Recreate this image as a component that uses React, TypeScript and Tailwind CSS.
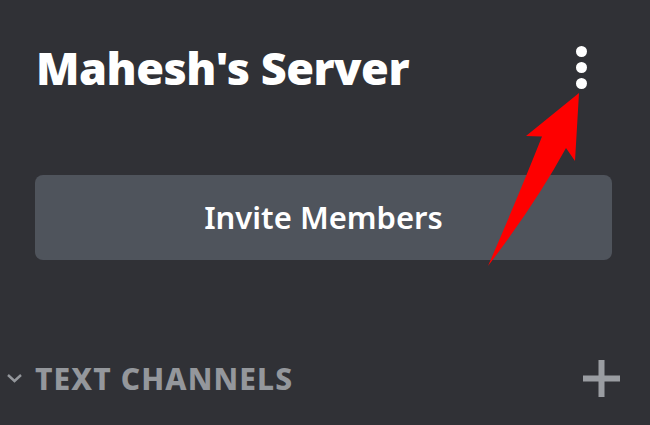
export default function App() {
  return (
    <div className="relative flex h-[425px] w-[650px] flex-col overflow-hidden bg-[#303136] font-['Noto_Sans','Open_Sans',sans-serif]">
      <div className="flex h-[134px] items-center justify-between pl-[36px] pr-[63px]">
        <h1 className="text-[45px] font-black leading-none tracking-[-0.5px] text-white">Mahesh's Server</h1>
        <div className="flex flex-col gap-[5px]">
          <span className="h-[11px] w-[11px] rounded-full bg-white" />
          <span className="h-[11px] w-[11px] rounded-full bg-white" />
          <span className="h-[11px] w-[11px] rounded-full bg-white" />
        </div>
      </div>
      <div className="mt-[41px] pl-[35px] pr-[38px]">
        <button className="flex h-[85px] w-full items-center justify-center rounded-[8px] bg-[#4f545c] text-[31px] font-semibold text-white">
          Invite Members
        </button>
      </div>
      <div className="mt-[100px] flex h-[37px] items-center justify-between pl-[7px] pr-[30px]">
        <div className="flex items-center gap-[13px]">
          <svg width="15" height="9" viewBox="0 0 15 9" fill="none" stroke="#94979c" strokeWidth="2.4">
            <path d="M1 1l6.5 6L14 1" />
          </svg>
          <span className="text-[30px] font-extrabold leading-none tracking-[1.1px] text-[#94979c]">TEXT CHANNELS</span>
        </div>
        <svg width="37" height="37" viewBox="0 0 37 37" fill="#9a9da2">
          <path d="M15.5 0h6v15.5H37v6H21.500V37h-6V21.500H0v-6h15.500z" />
        </svg>
      </div>
      <svg className="absolute left-0 top-0" width="650" height="425" viewBox="0 0 650 425" fill="#fe0000">
        <path d="M579 93L526 136L542 136.500Q518 197 488 266Q536 203 566 148L575 161Z" />
      </svg>
    </div>
  );
}
